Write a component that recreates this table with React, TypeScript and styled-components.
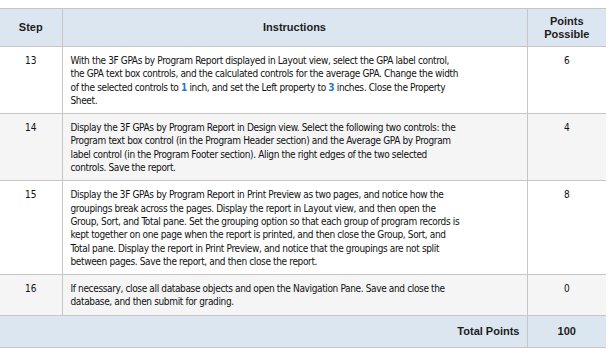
import React from 'react';
import styled, { createGlobalStyle } from 'styled-components';

const GlobalStyle = createGlobalStyle`
  body {
    margin: 0;
    background: #fff;
  }
`

const Num = styled.span`
  font-weight: 700;
  color: #1b7bd0;
`

type Step = {
  step: string;
  points: string;
  shaded?: boolean;
  lines: React.ReactNode[];
};

const steps: Step[] = [
  {
    step: '13',
    points: '6',
    lines: [
      'With the 3F GPAs by Program Report displayed in Layout view, select the GPA label control,',
      'the GPA text box controls, and the calculated controls for the average GPA. Change the width',
      <>of the selected controls to <Num>1</Num> inch, and set the Left property to <Num>3</Num> inches. Close the Property</>,
      'Sheet.',
    ],
  },
  {
    step: '14',
    points: '4',
    shaded: true,
    lines: [
      'Display the 3F GPAs by Program Report in Design view. Select the following two controls: the',
      'Program text box control (in the Program Header section) and the Average GPA by Program',
      'label control (in the Program Footer section). Align the right edges of the two selected',
      'controls. Save the report.',
    ],
  },
  {
    step: '15',
    points: '8',
    lines: [
      'Display the 3F GPAs by Program Report in Print Preview as two pages, and notice how the',
      'groupings break across the pages. Display the report in Layout view, and then open the',
      'Group, Sort, and Total pane. Set the grouping option so that each group of program records is',
      'kept together on one page when the report is printed, and then close the Group, Sort, and',
      'Total pane. Display the report in Print Preview, and notice that the groupings are not split',
      'between pages. Save the report, and then close the report.',
    ],
  },
  {
    step: '16',
    points: '0',
    shaded: true,
    lines: [
      'If necessary, close all database objects and open the Navigation Pane. Save and close the',
      'database, and then submit for grading.',
    ],
  },
];

function App() {
  return (
    <Page>
      <GlobalStyle />
      <Table>
        <colgroup>
          <col style={{ width: 62 }} />
          <col style={{ width: 465 }} />
          <col style={{ width: 79 }} />
        </colgroup>
        <thead>
          <HeadRow>
            <HeadCell>Step</HeadCell>
            <HeadCell>Instructions</HeadCell>
            <HeadCell>Points<br />Possible</HeadCell>
          </HeadRow>
        </thead>
        <tbody>
          {steps.map((s) => (
            <Row key={s.step} $shaded={s.shaded}>
              <NumCell>{s.step}</NumCell>
              <TextCell>
                {s.lines.map((line, i) => (
                  <React.Fragment key={i}>
                    {line}
                    {i < s.lines.length - 1 && <br />}
                  </React.Fragment>
                ))}
              </TextCell>
              <NumCell>{s.points}</NumCell>
            </Row>
          ))}
          <TotalRow>
            <TotalCell colSpan={2} $align="right">Total Points</TotalCell>
            <TotalCell $align="center">100</TotalCell>
          </TotalRow>
        </tbody>
      </Table>
    </Page>
  );
}

export default App;

const Page = styled.div`
  padding-top: 8px;
  width: 606px;
`

const Table = styled.table`
  width: 606px;
  table-layout: fixed;
  border-collapse: collapse;
  border-top: 1px solid #c6c6c6;
  border-bottom: 1px solid #c6c6c6;
`

const HeadRow = styled.tr`
  height: 38px;
  background: #dce6f1;
`

const HeadCell = styled.th`
  //Arial Bold
  font-family: "Liberation Sans", Arial, sans-serif;
  font-weight: 700;
  font-size: 11px;
  line-height: 13px;
  color: #1c1c1c;
  text-align: center;
  vertical-align: middle;
  padding: 0 6px;
  border-left: 1px solid #c6c6c6;

  &:first-child {
    border-left: none;
  }
`

const Row = styled.tr<{ $shaded?: boolean }>`
  background: ${(p) => (p.$shaded ? '#f5f5f5' : '#fff')};
  border-top: 1px solid #c6c6c6;
`

const BodyCell = styled.td`
  //Tahoma-like
  font-family: "DejaVu Sans Condensed", "DejaVu Sans", sans-serif;
  font-size: 10px;
  line-height: 13.3px;
  color: #111;
  vertical-align: top;
  padding: 7px 8px 6px 8px;
  border-left: 1px solid #c6c6c6;

  &:first-child {
    border-left: none;
  }
`

const NumCell = styled(BodyCell)`
  text-align: center;
`

const TextCell = styled(BodyCell)`
  white-space: nowrap;
  letter-spacing: -0.36px;
`

const TotalRow = styled.tr`
  height: 32px;
  background: #dce6f1;
  border-top: 1px solid #c6c6c6;
`

const TotalCell = styled.td<{ $align: string }>`
  font-family: "Liberation Sans", Arial, sans-serif;
  font-weight: 700;
  font-size: 11px;
  color: #1c1c1c;
  text-align: ${(p) => p.$align};
  vertical-align: middle;
  padding: 0 7px;
  border-left: 1px solid #c6c6c6;

  &:first-child {
    border-left: none;
  }
`
